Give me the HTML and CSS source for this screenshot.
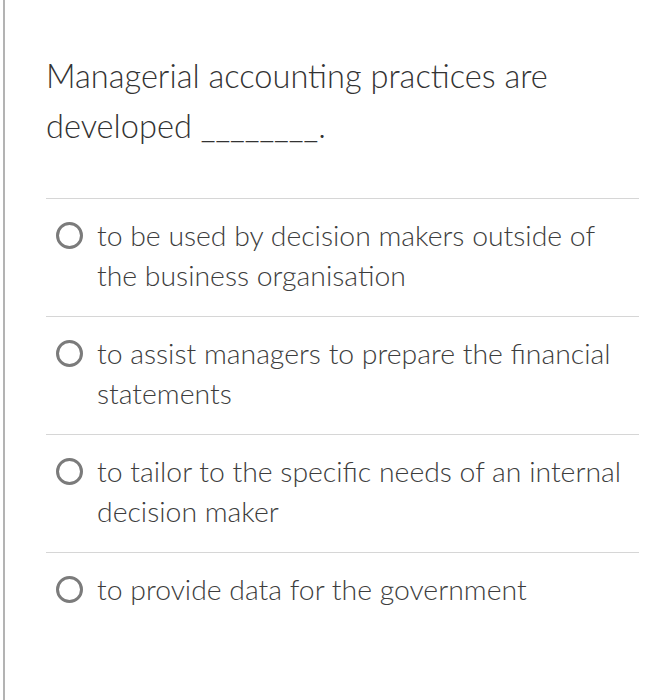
FILE: index.html
```html
<!DOCTYPE html>
<html>
<head>
<meta charset="utf-8">
<link rel="stylesheet" href="styles.css">
</head>
<body>
<div class="frame">
  <div class="question">Managerial accounting practices are developed ________.</div>
  <ul class="options">
    <li class="option"><span class="radio"></span><span class="label">to be used by decision makers outside of the business organisation</span></li>
    <li class="option"><span class="radio"></span><span class="label">to assist managers to prepare the financial statements</span></li>
    <li class="option"><span class="radio"></span><span class="label">to tailor to the specific needs of an internal decision maker</span></li>
    <li class="option"><span class="radio"></span><span class="label">to provide data for the government</span></li>
  </ul>
</div>
</body>
</html>
```

FILE: styles.css
```css
html, body {
  margin: 0;
  padding: 0;
  background: #fff;
}
body {
  font-family: Lato, "Open Sans", sans-serif;
  font-weight: 300;
  height: 700px;
  overflow: hidden;
}
.frame {
  margin-left: 3px;
  border-left: 2px solid #b3b3b3;
  height: 700px;
  padding: 51px 25px 0 41px;
  box-sizing: border-box;
}
.question {
  font-size: 32.6px;
  line-height: 50px;
  color: #333;
  margin-bottom: 47px;
}
.options {
  list-style: none;
  margin: 0;
  padding: 0;
}
.option {
  display: flex;
  align-items: flex-start;
  gap: 14px;
  border-top: 1px solid #d6d6d6;
  padding: 16px 12px 21px 10px;
  font-size: 28.4px;
  line-height: 40px;
  color: #3d3d3d;
}
.radio {
  flex: none;
  width: 27px;
  height: 27px;
  box-sizing: border-box;
  border: 3px solid #7b7b7b;
  border-radius: 50%;
  margin-top: 7px;
}
```
